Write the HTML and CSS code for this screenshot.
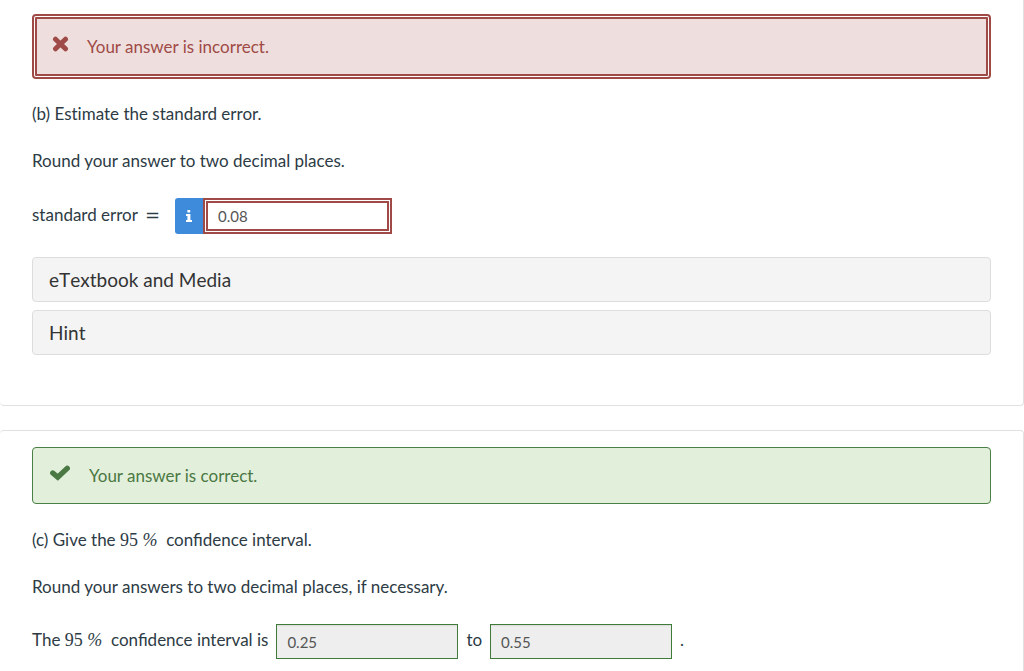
FILE: index.html
```html
<!DOCTYPE html>
<html lang="en">
<head>
<meta charset="utf-8">
<title>Question parts</title>
<link rel="stylesheet" href="styles.css">
</head>
<body>
<main class="page">
  <section class="card card-first">
    <div class="alert alert-wrong">
      <svg class="alert-icon" viewBox="0 0 16 16" aria-hidden="true"><path d="M3 3.200 13 12.800M13 3.200 3 12.800" stroke="currentColor" stroke-width="5" stroke-linecap="round" fill="none"/></svg>
      <span>Your answer is incorrect.</span>
    </div>
    <p class="text plain">(b) Estimate the standard error.</p>
    <p class="text">Round your answer to two decimal places.</p>
    <div class="answer-row">
      <label class="label-error" for="se">standard error <span class="equals">=</span></label>
      <div class="input-group">
        <button class="info" type="button" aria-label="Information"><svg class="info-icon" viewBox="0 0 6 12" aria-hidden="true"><path fill="currentColor" d="M1.400 0h2.800v2.500H1.400zM0 4h4.400v6.100H6V12H0v-1.900h1.400V5.900H0z"/></svg></button>
        <input class="field field-wrong" id="se" type="text" value="0.08">
      </div>
    </div>
    <div class="resources">
      <button class="resource" type="button">eTextbook and Media</button>
      <button class="resource" type="button">Hint</button>
    </div>
  </section>
  <section class="card card-second">
    <div class="alert alert-right">
      <svg class="alert-icon check-icon" viewBox="0 0 20 16" aria-hidden="true"><path d="M2.800 8 7.800 12.200 17.200 3.400" stroke="currentColor" stroke-width="5.400" stroke-linecap="round" stroke-linejoin="miter" fill="none"/></svg>
      <span>Your answer is correct.</span>
    </div>
    <p class="text">(c) Give the <span class="math">95 <i>%</i></span>&nbsp; confidence interval.</p>
    <p class="text">Round your answers to two decimal places, if necessary.</p>
    <div class="answer-row interval-row">
      <label for="low">The <span class="math">95 <i>%</i></span>&nbsp; confidence interval is</label>
      <input class="field field-right" id="low" type="text" value="0.25" readonly>
      <label for="high">to</label>
      <input class="field field-right" id="high" type="text" value="0.55" readonly>
      <span class="stop">.</span>
    </div>
  </section>
</main>
</body>
</html>
```
FILE: styles.css
```css
* { box-sizing: border-box; }
body {
  margin: 0;
  background: #fff;
  color: #2d3b45;
  font: 17px/25px Lato, sans-serif;
}
.page { display: flex; flex-direction: column; gap: 24px; }
.card {
  padding: 0 32px;
  border: 1px solid #e0e0e0;
  border-left: 0;
  border-radius: 4px;
}
.card-first {
  border-top: 0;
  border-radius: 0 0 4px 4px;
  padding-top: 14px;
  padding-bottom: 50px;
}
.card-second {
  border-bottom: 0;
  border-radius: 4px 4px 0 0;
  padding-top: 16px;
  padding-bottom: 12px;
}
.alert { display: flex; align-items: center; border-radius: 4px; }
.alert-wrong {
  height: 65px;
  margin-bottom: 22px;
  padding-left: 15px;
  gap: 18px;
  color: #9f4a46;
  border: 5px double #9f4a46;
  background: #eedfde;
  background-clip: padding-box;
}
.alert-right {
  height: 57px;
  margin-bottom: 23px;
  padding-left: 17px;
  gap: 19px;
  color: #4a7843;
  border: 1px solid #4a8045;
  background: #e2efda;
}
.alert-icon { width: 17px; height: 16px; margin-bottom: 5px; }
.check-icon { width: 20px; }
.text { margin: 0 0 22px; }
.plain { font-variant-ligatures: none; }
.math { font-family: "Liberation Serif", serif; font-size: 18px; line-height: 20px; }
.equals { margin-left: 3px; font-family: "DejaVu Sans", sans-serif; font-size: 18px; line-height: 20px; }
.answer-row { display: flex; align-items: center; margin-top: 25px; }
.answer-row label, .stop { padding-bottom: 4px; }
.label-error { margin-right: 15px; }
.input-group { display: flex; }
.info {
  display: flex;
  align-items: center;
  justify-content: center;
  width: 28px;
  height: 36px;
  padding: 0;
  border: 0;
  border-radius: 3px 0 0 3px;
  color: #fff;
  background: #3f8bdb;
}
.info-icon { width: 6px; height: 12px; }
.field {
  color: #555;
  font: 15px/20px Lato, sans-serif;
  border-radius: 0;
  outline: 0;
}
.field-wrong {
  width: 189px;
  height: 36px;
  padding: 1px 10px;
  border: 5px double #9f4a46;
  background: #fff;
}
.field-right {
  width: 182px;
  height: 35px;
  padding: 1px 10px;
  border: 1px solid #3f7c39;
  background: #eee;
  box-shadow: inset 0 1px 1px rgba(0, 0, 0, .08);
}
.interval-row { gap: 8px; }
.resources { display: flex; flex-direction: column; gap: 8px; margin-top: 23px; }
.resource {
  height: 45px;
  padding: 0 16px;
  border: 1px solid #ddd;
  border-radius: 4px;
  background: #f4f4f4;
  color: #333;
  font: 19px/24px Lato, sans-serif;
  font-kerning: none;
  text-align: left;
}
```
